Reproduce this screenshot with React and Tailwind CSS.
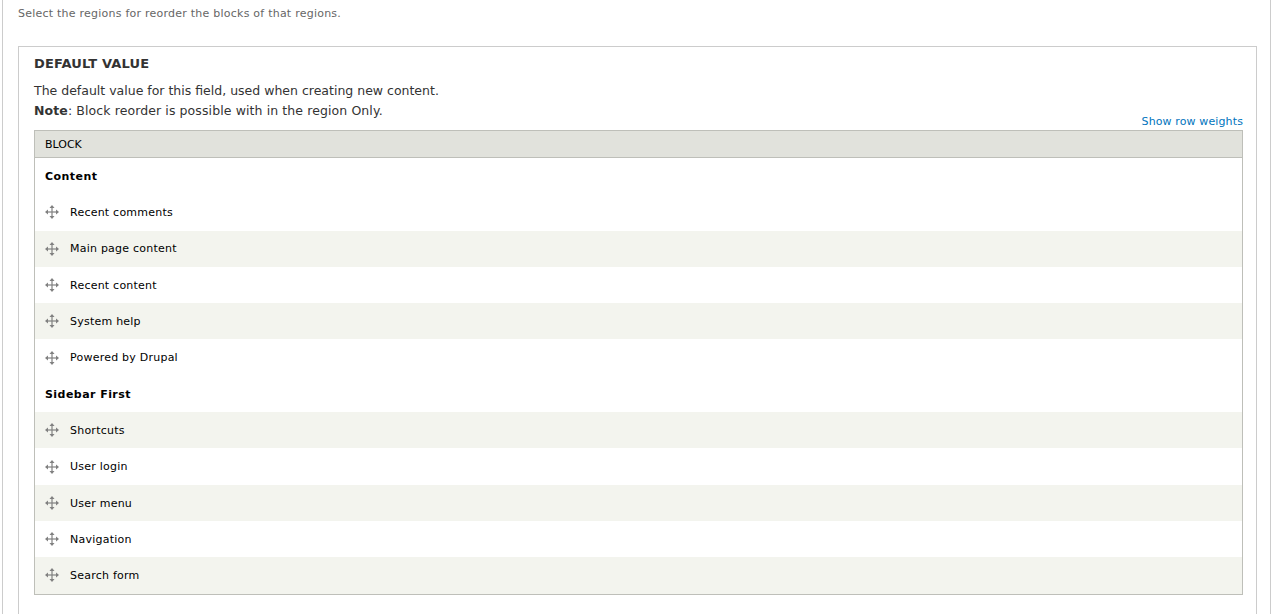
import React from 'react';

const rows = [
  { label: 'Content', region: true },
  { label: 'Recent comments' },
  { label: 'Main page content', even: true },
  { label: 'Recent content' },
  { label: 'System help', even: true },
  { label: 'Powered by Drupal' },
  { label: 'Sidebar First', region: true },
  { label: 'Shortcuts', even: true },
  { label: 'User login' },
  { label: 'User menu', even: true },
  { label: 'Navigation' },
  { label: 'Search form', even: true },
];

// Drupal tabledrag handle
function DragHandle() {
  return (
    <svg width="14" height="14" viewBox="0 0 14 14" className="mb-[2px] mr-[11px] shrink-0" fill="#808080">
      <path d="M6.4 2.5h1.2v9H6.4z" />
      <path d="M2.5 6.4h9v1.2h-9z" />
      <path d="M7 0l2.5 3h-5z" />
      <path d="M7 14l2.5-3h-5z" />
      <path d="M0 7l3-2.5v5z" />
      <path d="M14 7l-3-2.5v5z" />
    </svg>
  );
}

export default function App() {
  return (
    <div className="h-[614px] overflow-hidden bg-white font-['DejaVu_Sans',sans-serif] text-[12px]">
      <div className="mx-[2px] h-[640px] w-[1269px] border-x border-[#cccccc] pl-[15px] pr-[13px]">
        <p className="h-[46px] pt-[7px] text-[11px] leading-[14px] tracking-[0.235px] text-[#666666]">
          Select the regions for reorder the blocks of that regions.
        </p>
        <div className="h-[600px] border border-[#cccccc] pl-[15px] pr-[13px] pt-[9px]">
          <h2 className="text-[13px] font-bold leading-[16px] tracking-[0.15px] text-[#333333]">DEFAULT VALUE</h2>
          <p className="mt-[9px] text-[12.5px] leading-[20px] text-[#333333]">The default value for this field, used when creating new content.</p>
          <div className="flex h-[29px] items-start justify-between text-[12.5px] leading-[20px] text-[#333333]">
            <p className="tracking-[0.1px]"><strong>Note</strong>: Block reorder is possible with in the region Only.</p>
            <a href="#" className="mt-[11px] text-[11px] tracking-[0.12px] text-[#0074bd]">Show row weights</a>
          </div>
          <div className="border border-[#bebfb9]">
            <div className="flex h-[27px] items-center border-b border-[#bebfb9] bg-[#e1e2dc] px-[10px] pt-[2px] text-[11px] text-black">BLOCK</div>
            {rows.map((row) => (
              <div
                key={row.label}
                className={`flex h-[36.3px] items-center px-[10px] pt-[2px] text-[11px] tracking-[0.23px] text-black ${row.even ? 'bg-[#f3f4ee]' : 'bg-white'}`}
              >
                {row.region ? <strong className="tracking-[0.45px]">{row.label}</strong> : <><DragHandle />{row.label}</>}
              </div>
            ))}
          </div>
        </div>
      </div>
    </div>
  );
}
